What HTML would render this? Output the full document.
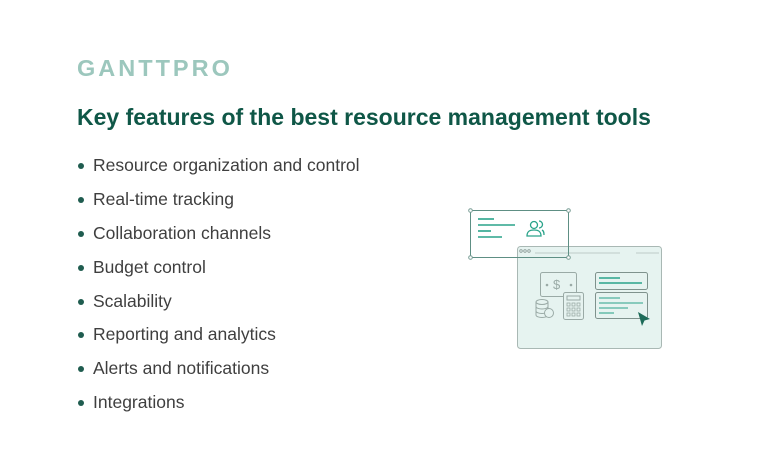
<!DOCTYPE html>
<html><head><style>
body{margin:0;width:768px;height:460px;background:#fff;position:relative;overflow:hidden;font-family:"Liberation Sans",sans-serif}
.logo{position:absolute;left:77px;top:55px;font-size:23.5px;font-weight:bold;color:#9cc7bd;letter-spacing:3px}
h1{position:absolute;left:77px;top:104px;margin:0;font-size:23px;font-weight:bold;color:#0f5747;white-space:nowrap}
ul{position:absolute;left:77px;top:153px;margin:0;padding:0;list-style:none}
li{font-size:17.5px;color:#3f3f3f;height:33.9px;line-height:24px;position:relative;padding-left:16px;white-space:nowrap}
li:before{content:"";position:absolute;left:1px;top:10px;width:6px;height:6px;border-radius:50%;background:#1f5c4f}
</style></head><body>
<div class="logo">GANTTPRO</div>
<h1>Key features of the best resource management tools</h1>
<ul>
<li>Resource organization and control</li>
<li>Real-time tracking</li>
<li>Collaboration channels</li>
<li>Budget control</li>
<li>Scalability</li>
<li>Reporting and analytics</li>
<li>Alerts and notifications</li>
<li>Integrations</li>
</ul>
<svg width="768" height="460" style="position:absolute;left:0;top:0" fill="none">
<rect x="517.5" y="246.5" width="144" height="102" rx="3" fill="#e6f3f0" stroke="#a9b8b4"/>
<circle cx="521" cy="251" r="1.3" stroke="#8a9a96" stroke-width=".8"/><circle cx="525" cy="251" r="1.3" stroke="#8a9a96" stroke-width=".8"/><circle cx="529" cy="251" r="1.3" stroke="#8a9a96" stroke-width=".8"/>
<line x1="535" y1="253" x2="620" y2="253" stroke="#bfcbc8"/><line x1="636" y1="253" x2="659" y2="253" stroke="#bfcbc8"/>
<rect x="470.5" y="210.5" width="98" height="47" stroke="#5e8f84"/>
<g fill="#fff" stroke="#7a9e96"><circle cx="470.5" cy="210.5" r="1.8"/><circle cx="568.5" cy="210.5" r="1.8"/><circle cx="470.5" cy="257.5" r="1.8"/><circle cx="568.5" cy="257.5" r="1.8"/></g>
<g stroke="#2aa38a" stroke-width="1.6"><line x1="478" y1="219" x2="494" y2="219"/><line x1="478" y1="225" x2="515" y2="225"/><line x1="478" y1="231" x2="491" y2="231"/><line x1="478" y1="237" x2="502" y2="237"/></g>
<g stroke="#2aa38a" stroke-width="1.3"><circle cx="534" cy="225" r="3.5"/><path d="M527 236c0-5 3-6 7-6s7 1 7 6z"/><path d="M539 221a3.5 3.5 0 0 1 0 7M542 230c2 1 2 3 2 5"/></g>
<g stroke="#9aaaa6" stroke-width="1"><rect x="540.5" y="272.5" width="36" height="24" rx="2" fill="#e6f3f0"/><text x="553" y="289" font-size="13" fill="#9aaaa6" stroke="none" font-family="Liberation Sans">$</text><circle cx="547" cy="285" r=".8" fill="#9aaaa6"/><circle cx="571" cy="285" r=".8" fill="#9aaaa6"/>
<rect x="563.5" y="292.5" width="20" height="27" rx="2" fill="#e6f3f0"/><rect x="567" y="296" width="13" height="4"/><g stroke-width=".8"><rect x="567" y="303" width="3" height="3"/><rect x="572" y="303" width="3" height="3"/><rect x="577" y="303" width="3" height="3"/><rect x="567" y="308" width="3" height="3"/><rect x="572" y="308" width="3" height="3"/><rect x="577" y="308" width="3" height="3"/><rect x="567" y="313" width="3" height="3"/><rect x="572" y="313" width="3" height="3"/><rect x="577" y="313" width="3" height="3"/></g>
<path d="M536 302v13c0 1.5 3 2.5 6 2.5s6-1 6-2.5v-13"/><ellipse cx="542" cy="302" rx="6" ry="2.5"/><path d="M536 306.5c0 1.5 3 2.5 6 2.5s6-1 6-2.5M536 311c0 1.5 3 2.5 6 2.5s6-1 6-2.5"/><circle cx="549" cy="313" r="4.5" fill="#e6f3f0"/></g>
<rect x="595.5" y="272.5" width="52" height="17" rx="2" stroke="#7f928d"/><g stroke="#2aa38a" stroke-width="1.5"><line x1="599" y1="278" x2="620" y2="278"/><line x1="599" y1="283" x2="642" y2="283"/></g>
<rect x="595.5" y="292.5" width="52" height="26" rx="2" stroke="#7f928d"/><g stroke="#2aa38a" stroke-width="1.3" opacity=".8"><line x1="599" y1="298" x2="620" y2="298"/><line x1="599" y1="303" x2="643" y2="303"/><line x1="599" y1="308" x2="628" y2="308"/><line x1="599" y1="313" x2="614" y2="313"/></g>
<path d="M638 312l12 7-5.5 1.5-2.5 5.5z" fill="#1d6b59"/>
</svg>
</body></html>
